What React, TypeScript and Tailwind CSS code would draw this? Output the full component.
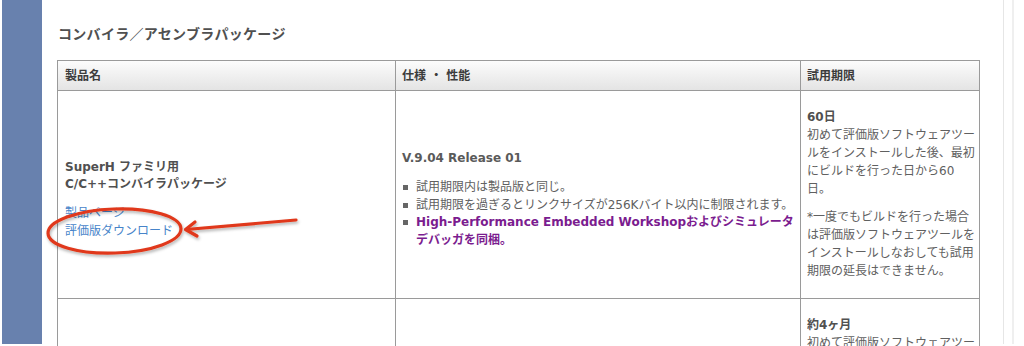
import React from "react";

const font = "font-['DejaVu_Sans','Noto_Sans_CJK_JP',sans-serif]";

function Bullet({ children, purple }: { children: React.ReactNode; purple?: boolean }) {
  return (
    <li className="flex">
      <span className="w-[13px] shrink-0 flex pt-[6px]">
        <span className="block w-[5px] h-[5px] bg-[#666]" />
      </span>
      <span className={purple ? "font-bold text-[#7b1c8f]" : "text-[#606060]"}>{children}</span>
    </li>
  );
}

function Annotation() {
  return (
    <svg
      className="absolute left-0 top-0 pointer-events-none"
      width="1024"
      height="346"
      viewBox="0 0 1024 346"
    >
      <defs>
        <filter id="redShadow" x="-20%" y="-40%" width="140%" height="180%">
          <feDropShadow dx="1" dy="2" stdDeviation="1.5" floodColor="#000" floodOpacity="0.3" />
        </filter>
      </defs>
      <g filter="url(#redShadow)" fill="none" stroke="#e0391a" strokeWidth="3.2" strokeLinecap="round" strokeLinejoin="round">
        <ellipse cx="114.5" cy="231" rx="66.5" ry="22" transform="rotate(-2 114.5 231)" />
        <path d="M296 220 L186 229.5" />
        <path d="M195 222 L185.5 229.5 L197 236" />
      </g>
    </svg>
  );
}

export default function App() {
  return (
    <div className={`relative w-[1024px] h-[346px] overflow-hidden bg-white ${font}`}>
      <div className="flex h-[344px]">
        <div className="w-[40px] ml-[2px] bg-[#6881ae]" />
        <div className="w-[962px] border-r border-[#e6e6e6] pl-[15px] pt-[25px]">
          <h2 className="text-[14px] leading-[18px] font-bold text-[#505050] mb-[17px] pl-[1px] tracking-[0.3px]">
            コンバイラ／アセンブラパッケージ
          </h2>

          <div className="w-[923px] border border-[#9a9a9a] text-[12px]">
            {/* header */}
            <div className="grid grid-cols-[338px_405px_178px] h-[30px] border-b border-[#9a9a9a] bg-gradient-to-b from-[#fcfcfc] to-[#e4e4e4] font-bold text-[#3c3c3c]">
              <div className="border-r border-[#9a9a9a] pl-[7px] flex items-center">製品名</div>
              <div className="border-r border-[#9a9a9a] pl-[6px] flex items-center">仕様 ・ 性能</div>
              <div className="pl-[6px] flex items-center">試用期限</div>
            </div>

            {/* row 1 */}
            <div className="grid grid-cols-[338px_405px_178px] h-[208px] border-b border-[#9a9a9a]">
              <div className="border-r border-[#9a9a9a] pl-[7px] pt-[68px]">
                <p className="font-bold text-[#505050] leading-[17px]">
                  SuperH ファミリ用
                  <br />
                  C/C++コンバイラパッケージ
                </p>
                <p className="mt-[11px] leading-[18px] text-[#4784c9]">
                  <a>製品ページ</a>
                  <br />
                  <a>評価版ダウンロード</a>
                </p>
              </div>
              <div className="border-r border-[#9a9a9a] pl-[6px] pt-[58px]">
                <p className="font-bold text-[#5a5a5a] leading-[18px]">V.9.04 Release 01</p>
                <ul className="mt-[12px] leading-[17.5px] pl-[1px]">
                  <Bullet>試用期限内は製品版と同じ。</Bullet>
                  <Bullet>試用期限を過ぎるとリンクサイズが256Kバイト以内に制限されます。</Bullet>
                  <Bullet purple>
                    High-Performance Embedded Workshopおよびシミュレータ
                    <br />
                    デバッガを同梱。
                  </Bullet>
                </ul>
              </div>
              <div className="pl-[6px] pt-[17px] leading-[18px] text-[#606060] whitespace-nowrap">
                <p className="font-bold text-[#505050]">60日</p>
                <p>
                  初めて評価版ソフトウェアツー
                  <br />
                  ルをインストールした後、最初
                  <br />
                  にビルドを行った日から60
                  <br />
                  日。
                </p>
                <p className="mt-[10px]">
                  *一度でもビルドを行った場合
                  <br />
                  は評価版ソフトウェアツールを
                  <br />
                  インストールしなおしても試用
                  <br />
                  期限の延長はできません。
                </p>
              </div>
            </div>

            {/* row 2 */}
            <div className="grid grid-cols-[338px_405px_178px] h-[60px]">
              <div className="border-r border-[#9a9a9a]" />
              <div className="border-r border-[#9a9a9a]" />
              <div className="pl-[6px] pt-[17px] leading-[18px] text-[#606060] whitespace-nowrap">
                <p className="font-bold text-[#505050]">約4ヶ月</p>
                <p>初めて評価版ソフトウェアツー</p>
              </div>
            </div>
          </div>
        </div>
        <div className="w-[2px] ml-[8px] bg-[#efefef]" />
      </div>
      <Annotation />
    </div>
  );
}
